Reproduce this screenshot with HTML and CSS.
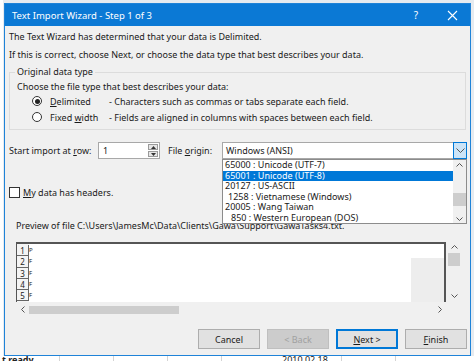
FILE: index.html
```html
<!DOCTYPE html>
<html lang="en">
<head>
  <meta charset="UTF-8" />
  <title>Text Import Wizard</title>
  <link rel="stylesheet" href="styles.css">
</head>
<body>
<div class="desk">
  <div class="dialog">
    <div class="titlebar">
      <span class="title">Text Import Wizard - Step 1 of 3</span>
      <span class="help">?</span>
      <span class="close">
        <svg width="11" height="11" viewBox="0 0 11 11"><path d="M1 1 L10 10 M10 1 L1 10" stroke="#fff" stroke-width="1.1" fill="none"/></svg>
      </span>
    </div>

    <div class="content">
      <p class="intro">The Text Wizard has determined that your data is Delimited.</p>
      <p class="intro">If this is correct, choose Next, or choose the data type that best describes your data.</p>

      <fieldset class="group">
        <legend>Original data type</legend>
        <p class="choose">Choose the file type that best describes your data:</p>
        <div class="option">
          <span class="radio checked"></span>
          <span class="opt-name"><u>D</u>elimited</span>
          <span class="opt-desc">- Characters such as commas or tabs separate each field.</span>
        </div>
        <div class="option">
          <span class="radio"></span>
          <span class="opt-name">Fixed <u>w</u>idth</span>
          <span class="opt-desc">- Fields are aligned in columns with spaces between each field.</span>
        </div>
      </fieldset>

      <div class="import-row">
        <span class="label-start">Start import at <u>r</u>ow:</span>
        <div class="spin">
          <span class="spin-value">1</span>
          <div class="spin-btns">
            <span class="spin-btn"><svg width="5" height="3" viewBox="0 0 5 3"><path d="M0 3 L2.5 0 L5 3 Z" fill="#333"/></svg></span>
            <span class="spin-btn"><svg width="5" height="3" viewBox="0 0 5 3"><path d="M0 0 L2.5 3 L5 0 Z" fill="#333"/></svg></span>
          </div>
        </div>
        <span class="label-origin">File <u>o</u>rigin:</span>
        <div class="select">
          <span class="select-value">Windows (ANSI)</span>
          <span class="select-btn">
            <svg width="9" height="5" viewBox="0 0 9 5"><path d="M0.5 0.5 L4.5 4.5 L8.5 0.5" stroke="#555" stroke-width="1" fill="none"/></svg>
          </span>
          <div class="dropdown">
            <ul class="dropdown-list">
              <li>65000 : Unicode (UTF-7)</li>
              <li class="selected">65001 : Unicode (UTF-8)</li>
              <li>20127 : US-ASCII</li>
              <li class="pad1">1258 : Vietnamese (Windows)</li>
              <li>20005 : Wang Taiwan</li>
              <li class="pad2">850 : Western European (DOS)</li>
            </ul>
            <div class="list-scroll">
              <svg class="arr" width="7" height="4" viewBox="0 0 7 4"><path d="M0.5 3.5 L3.5 0.5 L6.5 3.5" stroke="#555" stroke-width="1" fill="none"/></svg>
              <span class="list-thumb"></span>
              <svg class="arr" width="7" height="4" viewBox="0 0 7 4"><path d="M0.5 0.5 L3.5 3.5 L6.5 0.5" stroke="#555" stroke-width="1" fill="none"/></svg>
            </div>
          </div>
        </div>
      </div>

      <label class="headers"><span class="checkbox"></span><span><u>M</u>y data has headers.</span></label>

      <p class="preview-label">Preview of file C:\Users\JamesMc\Data\Clients\Gawa\Support\GawaTasks4.txt.</p>

      <div class="preview">
        <div class="preview-body">
          <div class="row-nums">
            <span class="num">1</span>
            <span class="num">2</span>
            <span class="num">3</span>
            <span class="num">4</span>
            <span class="num">5</span>
          </div>
          <div class="row-marks">
            <span>Þ</span><span>F</span><span>F</span><span>F</span><span>F</span>
          </div>
          <div class="preview-data"></div>
          <div class="preview-rest"></div>
        </div>
        <div class="vscroll">
          <svg width="7" height="4" viewBox="0 0 7 4"><path d="M0.5 3.5 L3.5 0.5 L6.5 3.5" stroke="#555" stroke-width="1" fill="none"/></svg>
          <span class="vthumb"></span>
          <svg class="vdown" width="7" height="4" viewBox="0 0 7 4"><path d="M0.5 0.5 L3.5 3.5 L6.5 0.5" stroke="#555" stroke-width="1" fill="none"/></svg>
        </div>
        <div class="hscroll">
          <svg width="4" height="7" viewBox="0 0 4 7"><path d="M3.5 0.5 L0.5 3.5 L3.5 6.5" stroke="#555" stroke-width="1" fill="none"/></svg>
          <span class="hthumb"></span>
          <svg class="hright" width="4" height="7" viewBox="0 0 4 7"><path d="M0.5 0.5 L3.5 3.5 L0.5 6.5" stroke="#555" stroke-width="1" fill="none"/></svg>
        </div>
      </div>

      <div class="buttons">
        <button class="btn">Cancel</button>
        <button class="btn disabled">&lt; <u>B</u>ack</button>
        <button class="btn default"><u>N</u>ext &gt;</button>
        <button class="btn"><u>F</u>inish</button>
      </div>
    </div>
  </div>

  <div class="sheet-row">
    <span class="cell status">t ready</span>
    <span class="cell"></span>
    <span class="cell"></span>
    <span class="cell"></span>
    <span class="cell date">2010 02 18</span>
    <span class="cell"></span>
  </div>
</div>
</body>
</html>
```

FILE: styles.css
```css
* { box-sizing: border-box; }

body {
  margin: 0;
  width: 474px;
  height: 361px;
  overflow: hidden;
  background: #f7f8fa;
  font-family: "Noto Sans", "Open Sans", sans-serif;
  font-size: 9px;
  color: #1a1a1a;
}

.desk {
  padding: 3px 0 0 4px;
  background: linear-gradient(90deg, #ffffff 0, #ffffff 3px, #e6ebf0 3px);
}

.dialog {
  width: 467px;
  height: 353px;
  background: #f0f0f0;
  border: 1px solid #1f83d8;
  display: flex;
  flex-direction: column;
}

.titlebar {
  height: 22px;
  background: #0b79d5;
  color: #fff;
  display: flex;
  align-items: center;
  padding-left: 7px;
  font-size: 9.5px;
}

.title { flex-grow: 1; }

.help {
  width: 36px;
  text-align: center;
  font-size: 10px;
}

.close {
  width: 36px;
  display: flex;
  justify-content: center;
}

.content {
  padding: 2px 3px 0 4px;
  flex-grow: 1;
}

p { margin: 0; }

.intro { line-height: 18px; }

.group {
  margin: 1px 1px 0 0;
  padding: 0 0 4px 7px;
  border: 1px solid #dcdcdc;
  border-top-color: #dcdcdc;
}

.group legend {
  padding: 0 2px;
  margin-left: -2px;
  line-height: 14px;
}

.choose {
  line-height: 12px;
  padding-top: 2px;
}

.option {
  display: flex;
  align-items: center;
  height: 16px;
}

.radio {
  width: 10px;
  height: 10px;
  border: 1px solid #333;
  border-radius: 50%;
  margin: 0 8px 0 15px;
  background: #fff;
  display: flex;
  align-items: center;
  justify-content: center;
}

.radio.checked::after {
  content: "";
  width: 5px;
  height: 5px;
  border-radius: 50%;
  background: #222;
}

.opt-name { width: 59px; }

.import-row {
  display: flex;
  align-items: center;
  margin-top: 12px;
  height: 17px;
}

.label-start { width: 89px; }

.spin {
  width: 62px;
  height: 17px;
  background: #fff;
  border: 1px solid #a8a8a8;
  display: flex;
  align-items: center;
  padding-left: 4px;
}

.spin-value { flex-grow: 1; }

.spin-btns {
  display: flex;
  flex-direction: column;
  gap: 1px;
  margin-right: 1px;
}

.spin-btn {
  width: 10px;
  height: 6px;
  background: #e6e6e6;
  border: 1px solid #9a9a9a;
  display: flex;
  align-items: center;
  justify-content: center;
}

.label-origin {
  margin-left: 8px;
  width: 54px;
}

.select {
  position: relative;
  width: 245px;
  height: 17px;
  background: #fff;
  border: 1px solid #a8a8a8;
  display: flex;
  align-items: center;
  padding-left: 3px;
}

.select-value { flex-grow: 1; }

.select-btn {
  width: 14px;
  height: 17px;
  margin: -1px -1px -1px 0;
  background: #cce4f7;
  border: 1px solid #0078d7;
  display: flex;
  align-items: center;
  justify-content: center;
}

.dropdown {
  position: absolute;
  top: 16px;
  left: -1px;
  width: 245px;
  height: 65px;
  background: #fff;
  border: 1px solid #8c8c8c;
  display: flex;
  z-index: 2;
}

.dropdown-list {
  list-style: none;
  margin: 0;
  padding: 0;
  flex-grow: 1;
  line-height: 10.6px;
}

.dropdown-list li { padding-left: 2px; }
.dropdown-list li.pad1 { padding-left: 5px; }
.dropdown-list li.pad2 { padding-left: 8px; }

.dropdown-list li.selected {
  background: #0078d7;
  color: #fff;
}

.list-scroll {
  width: 13px;
  background: #f0f0f0;
  display: flex;
  flex-direction: column;
  align-items: center;
  padding: 3px 0 2px;
}

.list-thumb {
  width: 13px;
  height: 13px;
  background: #cdcdcd;
  margin-top: 26px;
  margin-bottom: auto;
}

.headers {
  display: flex;
  align-items: center;
  gap: 3px;
  margin-top: 26px;
  height: 14px;
}

.checkbox {
  width: 11px;
  height: 11px;
  background: #fff;
  border: 1px solid #333;
}

.preview-label {
  margin-top: 20px;
  padding-left: 7px;
  line-height: 14px;
}

.preview {
  margin: 9px 0 0 7px;
  width: 446px;
  height: 75px;
  display: grid;
  grid-template-columns: 430px 16px;
  grid-template-rows: 60px 15px;
}

.preview-body {
  display: flex;
  border-top: 2px solid #555;
  border-left: 1px solid #555;
  border-right: 2px solid #555;
  background: #fff;
}

.row-nums {
  display: flex;
  flex-direction: column;
  width: 12px;
  background: #f4f4f4;
  padding-top: 1px;
}

.num {
  height: 11.3px;
  border: 1px solid #666;
  border-top: none;
  border-left: none;
  font-size: 8px;
  line-height: 11px;
  text-align: center;
}

.row-marks {
  display: flex;
  flex-direction: column;
  padding-top: 1px;
  font-size: 6px;
  line-height: 11.3px;
  width: 4px;
}

.preview-data {
  width: 378px;
}

.preview-rest {
  flex-grow: 1;
  background: #ededed;
  margin-top: 14px;
}

.vscroll {
  display: flex;
  flex-direction: column;
  align-items: center;
  padding-top: 3px;
}

.vthumb {
  width: 12px;
  height: 13px;
  background: #cdcdcd;
  margin-top: 4px;
}

.vdown { margin-top: auto; margin-bottom: 4px; }

.hscroll {
  display: flex;
  align-items: center;
  padding-left: 5px;
  gap: 4px;
}

.hthumb {
  width: 150px;
  height: 8px;
  background: #cdcdcd;
}

.hright { margin-left: auto; margin-right: 4px; }

.buttons {
  display: flex;
  justify-content: flex-end;
  gap: 7px;
  margin-top: 12px;
}

.btn {
  width: 62px;
  height: 20px;
  font-family: inherit;
  font-size: 9px;
  color: #1a1a1a;
  background: #e1e1e1;
  border: 1px solid #adadad;
  padding: 0;
}

.btn.disabled {
  background: #cccccc;
  border-color: #bfbfbf;
  color: #a0a0a0;
}

.btn.disabled u { text-decoration: none; }

.btn.default {
  border: 2px solid #0078d7;
}

.sheet-row {
  display: flex;
  margin-left: -4px;
  height: 8px;
  background: #fff;
  font-size: 9px;
  line-height: 8px;
  overflow: hidden;
}

.cell {
  width: 54px;
  border-right: 1px solid #d4d4d4;
  color: #222;
}

.cell.status {
  width: 60px;
  padding-left: 2px;
  font-weight: bold;
}

.cell.date {
  width: 120px;
  padding-left: 60px;
}
```
